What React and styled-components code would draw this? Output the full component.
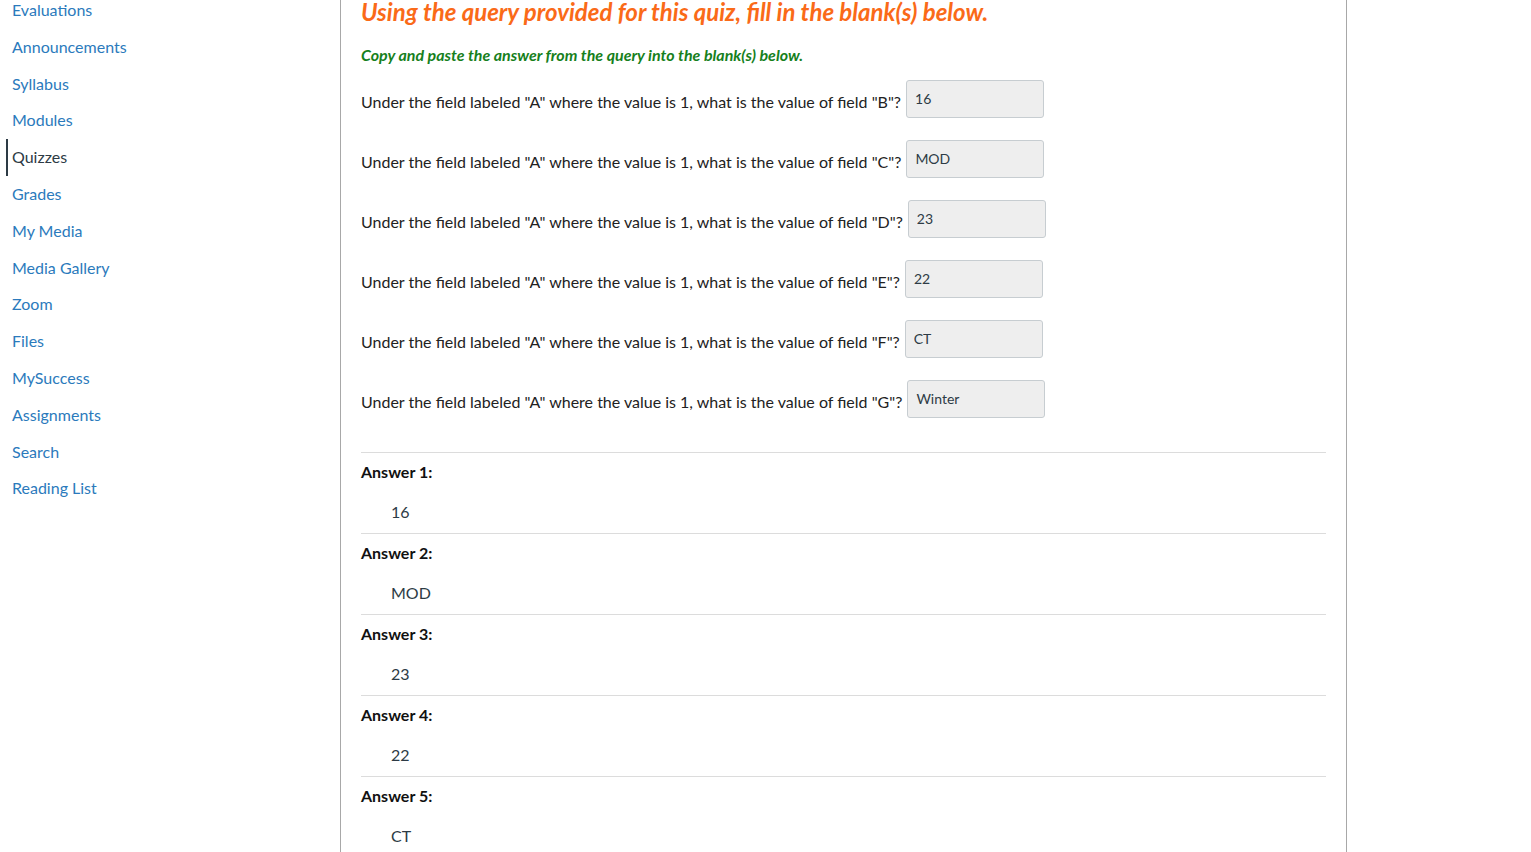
import React from "react";
import styled, { createGlobalStyle } from "styled-components";

const GlobalStyles = createGlobalStyle`
  body {
    margin: 0;
    background: #fff;
    font-family: Lato, "Noto Sans", sans-serif;
    color: #2d3b45;
    overflow: hidden;
  }
`;

const Page = styled.div`
  display: flex;
  align-items: flex-start;
  height: 852px;
  overflow: hidden;
`;

const Sidebar = styled.nav`
  width: 340px;
  flex-shrink: 0;
  margin-top: -8px;
`;

const NavItem = styled.div`
  margin-left: 6px;
  padding: 8px 0 8px 4px;
  line-height: 20.8px;
  font-size: 16px;
  border-left: 2px solid ${({ active }) => (active ? "#2d3b45" : "transparent")};
  color: ${({ active }) => (active ? "#2d3b45" : "#2b7abc")};
`;

const Main = styled.main`
  width: 965px;
  min-height: 900px;
  padding: 0 20px;
  border-left: 1px solid #a8a8a8;
  border-right: 1px solid #a8a8a8;
`;

const Title = styled.h2`
  margin: -3px 0 0;
  font-size: 24px;
  line-height: 30px;
  font-weight: 700;
  font-style: italic;
  color: #fa6a18;
`;

const Instructions = styled.p`
  margin: 17px 0 0;
  font-size: 16px;
  line-height: 22px;
  font-weight: 700;
  font-style: italic;
  color: #16801c;
`;

const Questions = styled.div`
  margin-top: 14px;
  display: flex;
  flex-direction: column;
  gap: 22px;
`;

const QuestionRow = styled.div`
  display: flex;
  align-items: center;
`;

const QuestionText = styled.span`
  font-size: 16px;
  line-height: 22px;
  color: #222;
  margin-top: 6px;
  margin-right: 5px;
`;

const Blank = styled.input`
  box-sizing: border-box;
  width: 138px;
  height: 38px;
  padding: 4px 8px 6px;
  border: 1px solid #c7cdd1;
  border-radius: 3px;
  background: #eeeeee;
  font-family: Lato, sans-serif;
  font-size: 14px;
  color: #2d3b45;
  outline: none;
`;

const Answers = styled.div`
  margin-top: 34px;
`;

const AnswerBlock = styled.div`
  border-top: 1px solid #dcdcdc;
  padding: 7px 0 9px;
`;

const AnswerLabel = styled.div`
  font-size: 16px;
  line-height: 24px;
  font-weight: 700;
  color: #111;
`;

const AnswerValue = styled.div`
  margin-top: 16px;
  padding-left: 30px;
  font-size: 16px;
  line-height: 24px;
  color: #2d3b45;
`;

const navItems = [
  "Evaluations",
  "Announcements",
  "Syllabus",
  "Modules",
  "Quizzes",
  "Grades",
  "My Media",
  "Media Gallery",
  "Zoom",
  "Files",
  "MySuccess",
  "Assignments",
  "Search",
  "Reading List",
];

const blanks = [
  { field: "B", value: "16" },
  { field: "C", value: "MOD" },
  { field: "D", value: "23" },
  { field: "E", value: "22" },
  { field: "F", value: "CT" },
  { field: "G", value: "Winter" },
];

const App = () => {
  return (
    <>
      <GlobalStyles />
      <Page>
        <Sidebar>
          {navItems.map((item) => (
            <NavItem key={item} active={item === "Quizzes"}>
              {item}
            </NavItem>
          ))}
        </Sidebar>
        <Main>
          <Title>Using the query provided for this quiz, fill in the blank(s) below.</Title>
          <Instructions>
            Copy and paste the answer from the query into the blank(s) below.
          </Instructions>
          <Questions>
            {blanks.map((b) => (
              <QuestionRow key={b.field}>
                <QuestionText>
                  Under the field labeled "A" where the value is 1, what is the value of field "{b.field}"?
                </QuestionText>
                <Blank readOnly defaultValue={b.value} />
              </QuestionRow>
            ))}
          </Questions>
          <Answers>
            {blanks.map((b, i) => (
              <AnswerBlock key={b.field}>
                <AnswerLabel>Answer {i + 1}:</AnswerLabel>
                <AnswerValue>{b.value}</AnswerValue>
              </AnswerBlock>
            ))}
          </Answers>
        </Main>
      </Page>
    </>
  );
};

export default App;
